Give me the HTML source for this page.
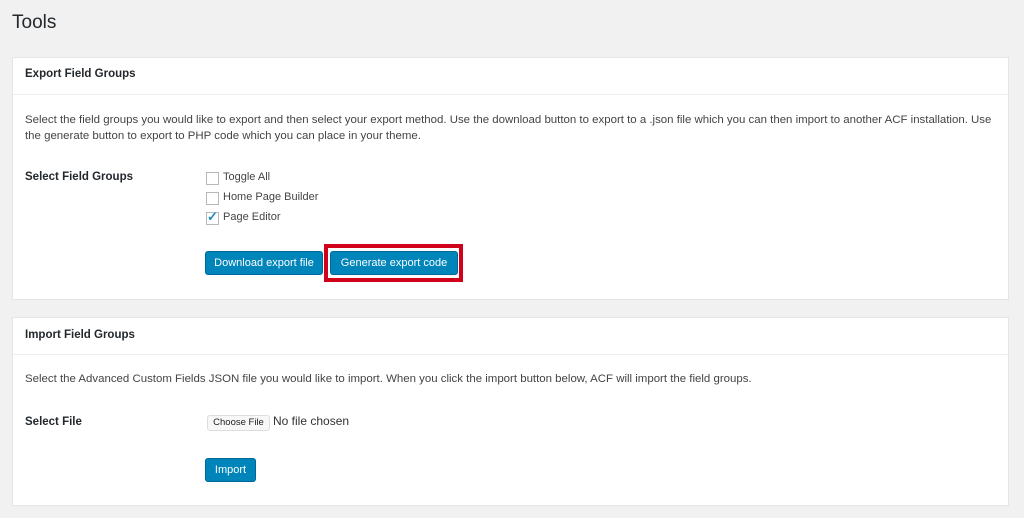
<!DOCTYPE html>
<html><head><style>
body{margin:0;width:1024px;height:518px;background:#f1f1f1;font-family:"Liberation Sans",sans-serif;color:#444;position:relative;overflow:hidden}
.a{position:absolute;white-space:nowrap}
.p{position:absolute;left:12px;width:997px;background:#fff;border:1px solid #e5e5e5;box-sizing:border-box}
.hl{position:absolute;left:0;right:0;height:1px;background:#eee}
.h{font-weight:bold;font-size:11.5px;color:#23282d}
.t{font-size:11px;color:#444}
.d{font-size:11.45px;color:#444}
.b{position:absolute;background:#0085ba;border:1px solid #006799;border-radius:3px;color:#fff;font-size:11px;text-align:center;box-sizing:border-box;line-height:22px}
.cb{position:absolute;width:13px;height:13px;border:1px solid #b4b9be;background:#fff;box-sizing:border-box}
</style></head><body>
<div class="a" style="left:12px;top:12px;font-size:19px;color:#23282d">Tools</div>
<div class="p" style="top:57px;height:243px"><div class="hl" style="top:36px"></div></div>
<div class="a h" style="left:25px;top:68px">Export Field Groups</div>
<div class="a d" style="left:25px;top:112px;line-height:16px">Select the field groups you would like to export and then select your export method. Use the download button to export to a .json file which you can then import to another ACF installation. Use<br>the generate button to export to PHP code which you can place in your theme.</div>
<div class="a h" style="left:25px;top:171px">Select Field Groups</div>
<div class="cb" style="left:206px;top:172px"></div><div class="a t" style="left:223px;top:171px">Toggle All</div>
<div class="cb" style="left:206px;top:192px"></div><div class="a t" style="left:223px;top:191px">Home Page Builder</div>
<div class="cb" style="left:206px;top:212px"></div><div class="a" style="left:207px;top:209px;color:#1e8cbe;font-size:13px;font-weight:bold">✓</div><div class="a t" style="left:223px;top:211px">Page Editor</div>
<div class="b" style="left:205px;top:251px;width:118px;height:24px">Download export file</div>
<div class="a" style="left:324px;top:244px;width:139px;height:38px;box-sizing:border-box;border:4px solid #d0021b;background:#fff"></div>
<div class="b" style="left:330px;top:251px;width:128px;height:24px">Generate export code</div>
<div class="p" style="top:317px;height:189px"><div class="hl" style="top:36px"></div></div>
<div class="a h" style="left:25px;top:329px">Import Field Groups</div>
<div class="a d" style="left:25px;top:373px">Select the Advanced Custom Fields JSON file you would like to import. When you click the import button below, ACF will import the field groups.</div>
<div class="a h" style="left:25px;top:416px">Select File</div>
<div class="a" style="left:207px;top:415px;width:61px;height:14px;border:1px solid #ddd;border-radius:3px;background:#f7f7f7;font-size:9.5px;color:#222;text-align:center;line-height:14px">Choose File</div>
<div class="a" style="left:273px;top:414px;font-size:12px;color:#333">No file chosen</div>
<div class="b" style="left:205px;top:458px;width:51px;height:24px">Import</div>
</body></html>
